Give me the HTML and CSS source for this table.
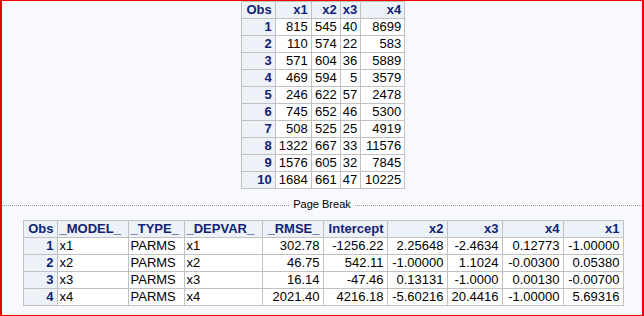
FILE: index.html
```html
<!DOCTYPE html>
<html>
<head>
<meta charset="utf-8">
<link rel="stylesheet" href="styles.css">
</head>
<body>
<div class="frame">
  <table class="sas t1">
    <thead>
      <tr><th class="c1">Obs</th><th class="c2">x1</th><th class="c3">x2</th><th class="c4">x3</th><th class="c5">x4</th></tr>
    </thead>
    <tbody>
      <tr><th>1</th><td>815</td><td>545</td><td>40</td><td>8699</td></tr>
      <tr><th>2</th><td>110</td><td>574</td><td>22</td><td>583</td></tr>
      <tr><th>3</th><td>571</td><td>604</td><td>36</td><td>5889</td></tr>
      <tr><th>4</th><td>469</td><td>594</td><td>5</td><td>3579</td></tr>
      <tr><th>5</th><td>246</td><td>622</td><td>57</td><td>2478</td></tr>
      <tr><th>6</th><td>745</td><td>652</td><td>46</td><td>5300</td></tr>
      <tr><th>7</th><td>508</td><td>525</td><td>25</td><td>4919</td></tr>
      <tr><th>8</th><td>1322</td><td>667</td><td>33</td><td>11576</td></tr>
      <tr><th>9</th><td>1576</td><td>605</td><td>32</td><td>7845</td></tr>
      <tr><th>10</th><td>1684</td><td>661</td><td>47</td><td>10225</td></tr>
    </tbody>
  </table>

  <div class="pagebreak"><span>Page Break</span></div>

  <table class="sas t2">
    <thead>
      <tr>
        <th class="c1">Obs</th>
        <th class="c2 l">_MODEL_</th>
        <th class="c3 l">_TYPE_</th>
        <th class="c4 l">_DEPVAR_</th>
        <th class="c5">_RMSE_</th>
        <th class="c6">Intercept</th>
        <th class="c7">x2</th>
        <th class="c8">x3</th>
        <th class="c9">x4</th>
        <th class="c10">x1</th>
      </tr>
    </thead>
    <tbody>
      <tr><th>1</th><td class="l">x1</td><td class="l">PARMS</td><td class="l">x1</td><td>302.78</td><td>-1256.22</td><td>2.25648</td><td>-2.4634</td><td>0.12773</td><td>-1.00000</td></tr>
      <tr><th>2</th><td class="l">x2</td><td class="l">PARMS</td><td class="l">x2</td><td>46.75</td><td>542.11</td><td>-1.00000</td><td>1.1024</td><td>-0.00300</td><td>0.05380</td></tr>
      <tr><th>3</th><td class="l">x3</td><td class="l">PARMS</td><td class="l">x3</td><td>16.14</td><td>-47.46</td><td>0.13131</td><td>-1.0000</td><td>0.00130</td><td>-0.00700</td></tr>
      <tr><th>4</th><td class="l">x4</td><td class="l">PARMS</td><td class="l">x4</td><td>2021.40</td><td>4216.18</td><td>-5.60216</td><td>20.4416</td><td>-1.00000</td><td>5.69316</td></tr>
    </tbody>
  </table>
</div>
</body>
</html>
```

FILE: styles.css
```css
html, body {
  margin: 0;
  padding: 0;
  background: #fafbfe;
}

.frame {
  box-sizing: border-box;
  width: 644px;
  height: 316px;
  border-style: solid;
  border-color: #ee0000;
  border-width: 1px 2px 1px 2px;
  padding-left: 2px;
  background: #f8f9ff;
  font-family: "Liberation Sans", Arial, sans-serif;
  display: flex;
  flex-direction: column;
  align-items: center;
}

.sas {
  border-collapse: separate;
  border-spacing: 0;
  border-top: 1px solid #c1c1c1;
  border-left: 1px solid #c1c1c1;
  font-size: 13px;
  flex: none;
}

.sas th,
.sas td {
  box-sizing: border-box;
  height: 17px;
  padding: 0 3px 0 2px;
  line-height: 16px;
  border-right: 1px solid #c1c1c1;
  border-bottom: 1px solid #c1c1c1;
  text-align: right;
  white-space: nowrap;
  vertical-align: middle;
}

.sas th {
  background: #edf2f9;
  color: #112277;
  font-weight: bold;
}

.sas td {
  background: #ffffff;
  color: #000000;
  font-weight: normal;
}

.sas .l {
  text-align: left;
}

.t1 .c1 { width: 34px; }
.t1 .c2 { width: 36px; }
.t1 .c3 { width: 29px; }
.t1 .c4 { width: 20px; }
.t1 .c5 { width: 44px; }

.t2 .c1 { width: 34px; }
.t2 .c2 { width: 71px; }
.t2 .c3 { width: 56px; }
.t2 .c4 { width: 78px; }
.t2 .c5 { width: 61px; }
.t2 .c6 { width: 64px; }
.t2 .c7 { width: 60px; }
.t2 .c8 { width: 55px; }
.t2 .c9 { width: 61px; }
.t2 .c10 { width: 60px; }

.pagebreak {
  align-self: stretch;
  margin-left: -2px;
  height: 31px;
  display: flex;
  align-items: center;
  font-size: 11px;
  color: #000000;
  flex: none;
}

.pagebreak::before,
.pagebreak::after {
  content: "";
  flex: 1;
  border-top: 1px dotted #9a9a9a;
  margin-top: 1px;
}

.pagebreak span {
  padding: 0 4px;
  line-height: 13px;
}
```
